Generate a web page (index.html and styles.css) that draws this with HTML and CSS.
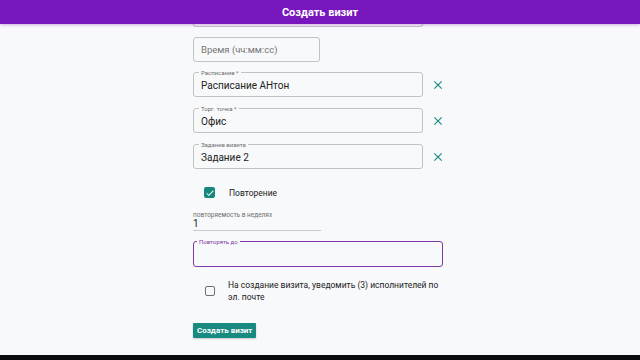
FILE: index.html
```html
<!DOCTYPE html>
<html lang="ru">
<head>
<meta charset="utf-8">
<link rel="stylesheet" href="styles.css">
</head>
<body>
<header class="appbar">Создать визит</header>
<main class="page">
  <div class="form">
    <div class="cut-field"></div>

    <div class="field field-short">
      <span class="placeholder">Время (чч:мм:сс)</span>
    </div>

    <div class="row">
      <div class="field field-wide">
        <span class="legend">Расписание *</span>
        <span class="value">Расписание АНтон</span>
      </div>
      <button class="clear" aria-label="Очистить">
        <svg viewBox="0 0 24 24" width="14" height="14"><path d="M19 6.41 17.59 5 12 10.59 6.41 5 5 6.41 10.59 12 5 17.59 6.41 19 12 13.41 17.59 19 19 17.59 13.41 12z"/></svg>
      </button>
    </div>

    <div class="row">
      <div class="field field-wide">
        <span class="legend">Торг. точка *</span>
        <span class="value">Офис</span>
      </div>
      <button class="clear" aria-label="Очистить">
        <svg viewBox="0 0 24 24" width="14" height="14"><path d="M19 6.41 17.59 5 12 10.59 6.41 5 5 6.41 10.59 12 5 17.59 6.41 19 12 13.41 17.59 19 19 17.59 13.41 12z"/></svg>
      </button>
    </div>

    <div class="row">
      <div class="field field-wide">
        <span class="legend">Задание визита</span>
        <span class="value">Задание 2</span>
      </div>
      <button class="clear" aria-label="Очистить">
        <svg viewBox="0 0 24 24" width="14" height="14"><path d="M19 6.41 17.59 5 12 10.59 6.41 5 5 6.41 10.59 12 5 17.59 6.41 19 12 13.41 17.59 19 19 17.59 13.41 12z"/></svg>
      </button>
    </div>

    <label class="check check-repeat">
      <span class="box box-on">
        <svg viewBox="0 0 24 24" width="10" height="10"><path d="M9 16.17 4.83 12l-1.42 1.41L9 19 21 7l-1.41-1.41z"/></svg>
      </span>
      <span class="check-text">Повторение</span>
    </label>

    <div class="underline-field">
      <span class="small-label">повторяемость в неделях</span>
      <span class="uvalue">1</span>
    </div>

    <div class="field field-focus">
      <span class="legend legend-focus">Повторять до</span>
    </div>

    <label class="check check-notify">
      <span class="box box-off"></span>
      <span class="check-text">На создание визита, уведомить (3) исполнителей по эл. почте</span>
    </label>

    <button class="submit">Создать визит</button>
  </div>
</main>
<div class="bottombar"></div>
</body>
</html>
```

FILE: styles.css
```css
* { box-sizing: border-box; }
html, body { margin: 0; padding: 0; }
body {
  width: 640px;
  height: 360px;
  overflow: hidden;
  background: #f8f9fa;
  font-family: Roboto, "Liberation Sans", sans-serif;
  color: #212121;
  display: flex;
  flex-direction: column;
}
.appbar {
  height: 24px;
  flex: none;
  background: #7816bd;
  color: #fff;
  font-weight: 700;
  font-size: 11px;
  display: flex;
  align-items: center;
  justify-content: center;
  box-shadow: 0 1px 3px rgba(120, 40, 180, 0.35);
  position: relative;
  z-index: 2;
}
.page {
  flex: 1;
  display: flex;
  justify-content: flex-start;
  padding-left: 193px;
}
.form {
  width: 270px;
  display: flex;
  flex-direction: column;
}
.cut-field {
  width: 230px;
  height: 3px;
  border: 1px solid #c4c4c4;
  border-top: none;
  border-radius: 0 0 3px 3px;
}
.field {
  position: relative;
  height: 25px;
  border: 1px solid #c2c2c2;
  border-radius: 3px;
  display: flex;
  align-items: center;
  padding-left: 7px;
  background: #f8f9fa;
}
.field-short {
  width: 127px;
  margin-top: 10px;
}
.field-wide { width: 230px; }
.row {
  display: flex;
  align-items: center;
  margin-top: 10px;
}
.row + .row { margin-top: 11px; }
.placeholder {
  font-size: 9.5px;
  color: #757575;
}
.value {
  font-size: 10px;
  color: #212121;
  padding-top: 2px;
}
.legend {
  position: absolute;
  left: 5px;
  top: -4px;
  font-size: 6px;
  line-height: 7px;
  color: #6b6b6b;
  background: #f8f9fa;
  padding: 0 2px;
}
.clear {
  width: 30px;
  height: 25px;
  border: none;
  background: none;
  padding: 0;
  margin-left: 0;
  display: flex;
  align-items: center;
  justify-content: center;
  fill: #198a80;
}
.check {
  display: flex;
  align-items: flex-start;
  font-size: 8.5px;
  color: #212121;
}
.check-repeat {
  margin-top: 18px;
  padding-left: 11px;
  align-items: center;
}
.box {
  width: 11px;
  height: 11px;
  border-radius: 2px;
  flex: none;
  display: flex;
  align-items: center;
  justify-content: center;
}
.box-on {
  background: #17877d;
  fill: #fff;
}
.box-off {
  border: 1.5px solid #6e6e6e;
  width: 10px;
  height: 10px;
  margin-top: 6px;
}
.check-repeat .check-text { margin-left: 14px; }
.underline-field {
  margin-top: 13px;
  width: 128px;
  border-bottom: 1px solid #c9c9c9;
  display: flex;
  flex-direction: column;
  padding-bottom: 2px;
}
.small-label {
  font-size: 6.5px;
  line-height: 8px;
  color: #6f6f6f;
}
.uvalue {
  font-size: 10px;
  line-height: 9px;
  color: #212121;
}
.field-focus {
  width: 250px;
  height: 26px;
  margin-top: 10px;
  border: 1.5px solid #7e3aa6;
}
.legend-focus {
  color: #7e3aa6;
  top: -4.5px;
  left: 3px;
}
.check-notify {
  margin-top: 13px;
  padding-left: 12px;
}
.check-notify .check-text {
  margin-left: 13px;
  width: 215px;
  line-height: 12px;
  margin-top: -1px;
}
.submit {
  margin-top: 20px;
  align-self: flex-start;
  height: 15px;
  padding: 0 4px;
  border: none;
  border-radius: 1px;
  background: #198a7f;
  color: #fff;
  font-family: Roboto, "Liberation Sans", sans-serif;
  font-weight: 700;
  font-size: 8px;
  box-shadow: 0 1px 2px rgba(0,0,0,0.2);
}
.bottombar {
  height: 5px;
  flex: none;
  background: #0b0c10;
}
```
